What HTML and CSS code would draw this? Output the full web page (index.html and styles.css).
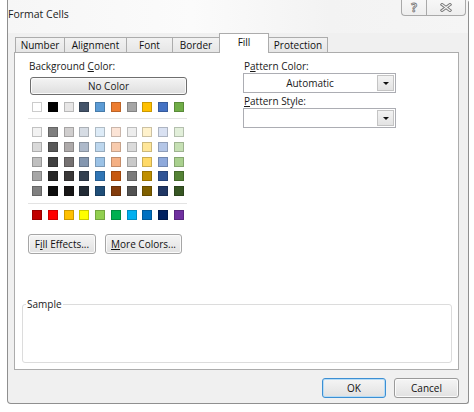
FILE: index.html
```html
<!DOCTYPE html>
<html>
<head>
<meta charset="utf-8">
<title>Format Cells</title>
<link rel="stylesheet" href="styles.css">
</head>
<body>
<div class="window">
  <div class="titlebar">
    <span class="title">Format Cells</span>
    <div class="caption-btns">
      <div class="cap help">?</div>
      <div class="cap close">
        <svg width="12" height="9" viewBox="0 0 12 9"><path d="M2 1.5 L10 7.5 M10 1.5 L2 7.5" stroke="#7a7a7a" stroke-width="3" stroke-linecap="square" fill="none"/><path d="M2 1.5 L10 7.5 M10 1.5 L2 7.5" stroke="#f6f6f6" stroke-width="1.2" stroke-linecap="square" fill="none"/></svg>
      </div>
    </div>
  </div>
  <div class="body">
    <div class="tabs">
      <div class="tab t-number">Number</div>
      <div class="tab t-align">Alignment</div>
      <div class="tab t-font">Font</div>
      <div class="tab t-border">Border</div>
      <div class="tab t-fill active">Fill</div>
      <div class="tab t-prot">Protection</div>
    </div>
    <div class="panel">
      <div class="cols">
        <div class="left">
          <div class="label">Background <u>C</u>olor:</div>
          <div class="nocolor"><span>No Color</span></div>
          <div class="grid theme">
            <span class="sw" style="background:#ffffff"></span><span class="sw" style="background:#000000"></span><span class="sw" style="background:#e7e6e6"></span><span class="sw" style="background:#44546a"></span><span class="sw" style="background:#5b9bd5"></span><span class="sw" style="background:#ed7d31"></span><span class="sw" style="background:#a5a5a5"></span><span class="sw" style="background:#ffc000"></span><span class="sw" style="background:#4472c4"></span><span class="sw" style="background:#70ad47"></span>
          </div>
          <div class="sep"></div>
          <div class="grid tints">
            <span class="sw" style="background:#f2f2f2"></span><span class="sw" style="background:#7f7f7f"></span><span class="sw" style="background:#d0cece"></span><span class="sw" style="background:#d6dce4"></span><span class="sw" style="background:#ddebf7"></span><span class="sw" style="background:#fce4d6"></span><span class="sw" style="background:#ededed"></span><span class="sw" style="background:#fff2cc"></span><span class="sw" style="background:#d9e1f2"></span><span class="sw" style="background:#e2efda"></span>
            <span class="sw" style="background:#d9d9d9"></span><span class="sw" style="background:#595959"></span><span class="sw" style="background:#aeaaaa"></span><span class="sw" style="background:#adb9ca"></span><span class="sw" style="background:#bdd7ee"></span><span class="sw" style="background:#f8cbad"></span><span class="sw" style="background:#dbdbdb"></span><span class="sw" style="background:#ffe699"></span><span class="sw" style="background:#b4c6e7"></span><span class="sw" style="background:#c6e0b4"></span>
            <span class="sw" style="background:#bfbfbf"></span><span class="sw" style="background:#404040"></span><span class="sw" style="background:#757171"></span><span class="sw" style="background:#8497b0"></span><span class="sw" style="background:#9bc2e6"></span><span class="sw" style="background:#f4b084"></span><span class="sw" style="background:#c9c9c9"></span><span class="sw" style="background:#ffd966"></span><span class="sw" style="background:#8ea9db"></span><span class="sw" style="background:#a9d08e"></span>
            <span class="sw" style="background:#a6a6a6"></span><span class="sw" style="background:#262626"></span><span class="sw" style="background:#3a3838"></span><span class="sw" style="background:#333f4f"></span><span class="sw" style="background:#2f75b5"></span><span class="sw" style="background:#c65911"></span><span class="sw" style="background:#7b7b7b"></span><span class="sw" style="background:#bf8f00"></span><span class="sw" style="background:#305496"></span><span class="sw" style="background:#548235"></span>
            <span class="sw" style="background:#808080"></span><span class="sw" style="background:#0d0d0d"></span><span class="sw" style="background:#171616"></span><span class="sw" style="background:#222b35"></span><span class="sw" style="background:#1f4e78"></span><span class="sw" style="background:#833c0c"></span><span class="sw" style="background:#525252"></span><span class="sw" style="background:#806000"></span><span class="sw" style="background:#203764"></span><span class="sw" style="background:#375623"></span>
          </div>
          <div class="sep sep2"></div>
          <div class="grid standard">
            <span class="sw" style="background:#c00000"></span><span class="sw" style="background:#ff0000"></span><span class="sw" style="background:#ffc000"></span><span class="sw" style="background:#ffff00"></span><span class="sw" style="background:#92d050"></span><span class="sw" style="background:#00b050"></span><span class="sw" style="background:#00b0f0"></span><span class="sw" style="background:#0070c0"></span><span class="sw" style="background:#002060"></span><span class="sw" style="background:#7030a0"></span>
          </div>
          <div class="btnrow">
            <button class="btn fill-effects">F<u>i</u>ll Effects...</button>
            <button class="btn more-colors"><u>M</u>ore Colors...</button>
          </div>
        </div>
        <div class="right">
          <div class="label">P<u>a</u>ttern Color:</div>
          <div class="combo"><span class="combo-text">Automatic</span><span class="arrow"><span class="tri"></span></span></div>
          <div class="label label2"><u>P</u>attern Style:</div>
          <div class="combo"><span class="combo-text"></span><span class="arrow"><span class="tri"></span></span></div>
        </div>
      </div>
      <fieldset class="sample"><legend>Sample</legend></fieldset>
    </div>
    <div class="footer">
      <button class="btn dlg ok">OK</button>
      <button class="btn dlg cancel">Cancel</button>
    </div>
  </div>
</div>
</body>
</html>
```

FILE: styles.css
```css
* { box-sizing: border-box; }

html, body {
  margin: 0;
  padding: 0;
  background: #ffffff;
}

body {
  font-family: "Open Sans", "Noto Sans", "DejaVu Sans", sans-serif;
  font-size: 10px;
  color: #1a1a1a;
}

.window {
  margin-left: 7px;
  width: 462px;
  height: 404px;
  border: 1px solid #8f8f8f;
  border-top: none;
  border-radius: 0 3px 3px 4px;
  background: #f0f0f0;
  display: flex;
  flex-direction: column;
}

.titlebar {
  height: 33px;
  display: flex;
  align-items: flex-start;
  background: linear-gradient(90deg, #f6f6f6 0%, #fbfbfb 40%, #f3f3f3 70%, #f5f5f5 100%);
}

.title {
  font-size: 10.5px;
  line-height: 14px;
  margin-top: 7px;
  color: #1c1c1c;
}

.caption-btns {
  margin-left: auto;
  margin-right: 2px;
  display: flex;
}

.cap {
  height: 16px;
  border: 1px solid #a9a9a9;
  border-top: none;
  background: linear-gradient(#f7f7f7, #eeeeee);
  display: flex;
  align-items: center;
  justify-content: center;
}

.help {
  width: 25px;
  border-radius: 0 0 0 4px;
  border-right: none;
  font-size: 12px;
  font-weight: bold;
  line-height: 1;
  color: #fafafa;
  -webkit-text-stroke: 0.8px #777777;
}

.close {
  width: 40px;
  border-radius: 0 0 4px 0;
}

.body {
  flex: 1;
  display: flex;
  flex-direction: column;
  padding: 0 9px 0 6px;
}

.tabs {
  height: 19px;
  display: flex;
  align-items: flex-end;
  margin-left: 1px;
}

.tab {
  height: 15px;
  margin-right: -1px;
  border: 1px solid #acacac;
  border-bottom: none;
  background: linear-gradient(#f2f2f2, #e6e6e6);
  display: flex;
  align-items: center;
  justify-content: center;
  font-size: 10px;
  line-height: 13px;
  color: #111;
}

.tab.active {
  height: 20px;
  margin-bottom: -1px;
  background: #ffffff;
  position: relative;
  z-index: 1;
  padding-bottom: 3px;
}

.t-number { width: 50px; }
.t-align { width: 63px; }
.t-font { width: 47px; }
.t-border { width: 48px; }
.t-fill { width: 50px; }
.t-prot { width: 60px; }

.panel {
  height: 318px;
  border: 1px solid #acacac;
  background: #ffffff;
  display: flex;
  flex-direction: column;
  padding: 6px 6px 6px 7px;
}

.cols {
  display: flex;
  padding-left: 6px;
}

.left {
  width: 159px;
  display: flex;
  flex-direction: column;
}

.right {
  margin-left: 56px;
  width: 153px;
  display: flex;
  flex-direction: column;
}

.label {
  line-height: 14px;
  height: 14px;
  white-space: nowrap;
  padding-left: 1px;
}

.label2 {
  margin-top: 1px;
}

.nocolor {
  margin-top: 4px;
  margin-left: 2px;
  height: 18px;
  border: 1px solid #6e6e6e;
  border-radius: 3px;
  background: linear-gradient(#f4f4f4, #dedede);
  box-shadow: inset 0 0 0 1px #fafafa;
  display: flex;
  align-items: center;
  justify-content: center;
  font-size: 10px;
}

.grid {
  display: grid;
  grid-template-columns: repeat(10, 10px);
  column-gap: 5.78px;
  row-gap: 4.75px;
  margin-left: 4px;
}

.theme {
  margin-top: 7px;
}

.sw {
  display: block;
  width: 10px;
  height: 10px;
  border: 1px solid rgba(0, 0, 0, 0.2);
}

.sep {
  height: 1px;
  background: #e3e3e3;
  margin-top: 6px;
  margin-bottom: 8px;
}

.sep2 {
  margin-top: 7px;
  margin-bottom: 6px;
}

.btnrow {
  display: flex;
  gap: 9px;
  margin-top: 14px;
}

.btn {
  font-family: inherit;
  font-size: 10px;
  color: #111;
  height: 20px;
  padding: 0;
  border: 1px solid #a6a6a6;
  border-radius: 3px;
  background: linear-gradient(#f5f5f5, #e1e1e1);
  box-shadow: inset 0 0 0 1px #fbfbfb;
}

.fill-effects { width: 68px; }
.more-colors { width: 77px; }

.combo {
  height: 20px;
  border: 1px solid #acadb3;
  background: #ffffff;
  display: flex;
}

.combo-text {
  flex: 1;
  text-align: center;
  line-height: 18px;
  font-size: 10px;
}

.arrow {
  width: 17px;
  margin: 1px;
  border: 1px solid #c4c4c4;
  background: linear-gradient(#f3f3f3, #e3e3e3);
  display: flex;
  align-items: center;
  justify-content: center;
}

.tri {
  width: 0;
  height: 0;
  border-left: 3px solid transparent;
  border-right: 3px solid transparent;
  border-top: 3px solid #111;
}

.sample {
  margin: auto 0 0 0;
  padding: 0;
  height: 66px;
  border: 1px solid #dcdcdc;
  border-radius: 3px;
}

.sample legend {
  margin-left: 3px;
  padding: 0 1px;
  line-height: 14px;
  font-size: 10px;
  color: #1a1a1a;
}

.footer {
  display: flex;
  justify-content: flex-end;
  gap: 8px;
  padding-right: 0;
  margin-top: 8px;
}

.dlg {
  width: 64px;
  height: 20px;
}

.ok {
  border-color: #3c8fd3;
  box-shadow: inset 0 0 0 1px #b6dcf6;
}

.cancel {
  width: 65px;
  border-color: #9a9a9a;
}
```
